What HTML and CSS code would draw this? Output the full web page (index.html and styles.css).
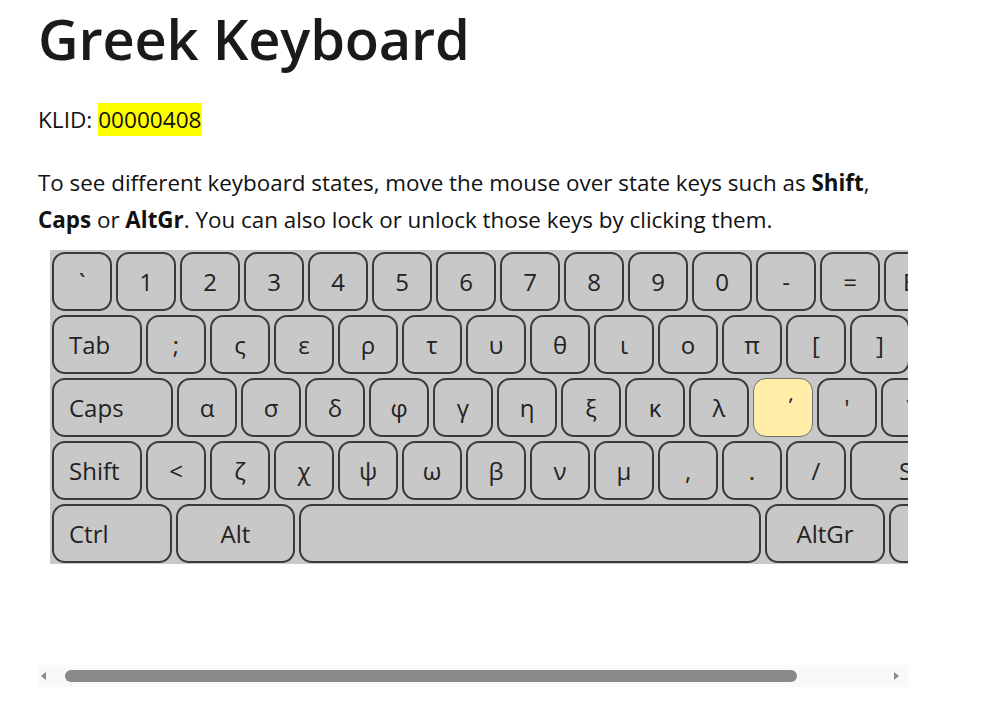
FILE: index.html
```html
<!DOCTYPE html>
<html lang="en">
<head>
    <meta charset="UTF-8">
    <meta name="viewport" content="width=device-width, initial-scale=1.0">
    <title>Greek Keyboard</title>
    <link rel="stylesheet" href="styles.css">
</head>
<body>
    <div class="page">
        <h1>Greek Keyboard</h1>
        <p class="klid">KLID: <mark>00000408</mark></p>
        <p class="intro">To see different keyboard states, move the mouse over state keys such as <b>Shift</b>, <b>Caps</b> or <b>AltGr</b>. You can also lock or unlock those keys by clicking them.</p>

        <div class="kb-view">
            <div class="keyboard">
                <!-- number row -->
                <div class="row">
                    <div class="key">`</div>
                    <div class="key">1</div>
                    <div class="key">2</div>
                    <div class="key">3</div>
                    <div class="key">4</div>
                    <div class="key">5</div>
                    <div class="key">6</div>
                    <div class="key">7</div>
                    <div class="key">8</div>
                    <div class="key">9</div>
                    <div class="key">0</div>
                    <div class="key">-</div>
                    <div class="key">=</div>
                    <div class="key mod w-back">B</div>
                </div>
                <div class="row">
                    <div class="key mod w-tab">Tab</div>
                    <div class="key">;</div>
                    <div class="key">ς</div>
                    <div class="key">ε</div>
                    <div class="key">ρ</div>
                    <div class="key">τ</div>
                    <div class="key">υ</div>
                    <div class="key">θ</div>
                    <div class="key">ι</div>
                    <div class="key">ο</div>
                    <div class="key">π</div>
                    <div class="key">[</div>
                    <div class="key">]</div>
                    <div class="key w-tab"></div>
                </div>
                <div class="row">
                    <div class="key mod w-caps">Caps</div>
                    <div class="key">α</div>
                    <div class="key">σ</div>
                    <div class="key">δ</div>
                    <div class="key">φ</div>
                    <div class="key">γ</div>
                    <div class="key">η</div>
                    <div class="key">ξ</div>
                    <div class="key">κ</div>
                    <div class="key">λ</div>
                    <div class="key dead">΄</div>
                    <div class="key">'</div>
                    <div class="key">\</div>
                    <div class="key"></div>
                </div>
                <div class="row">
                    <div class="key mod w-tab">Shift</div>
                    <div class="key">&lt;</div>
                    <div class="key">ζ</div>
                    <div class="key">χ</div>
                    <div class="key">ψ</div>
                    <div class="key">ω</div>
                    <div class="key">β</div>
                    <div class="key">ν</div>
                    <div class="key">μ</div>
                    <div class="key">,</div>
                    <div class="key">.</div>
                    <div class="key">/</div>
                    <div class="key mod w-rshift">S</div>
                </div>
                <div class="row">
                    <div class="key mod w-ctrl">Ctrl</div>
                    <div class="key w-alt">Alt</div>
                    <div class="key w-space"></div>
                    <div class="key w-ctrl">AltGr</div>
                    <div class="key w-alt"></div>
                </div>
            </div>
        </div>
        <div class="scrollbar">
            <span class="sb-left"></span>
            <span class="sb-thumb"></span>
            <span class="sb-right"></span>
        </div>
    </div>
</body>
</html>
```

FILE: styles.css
```css
body {
    margin: 0;
    padding: 0 38px;
    font-family: "Open Sans", "Noto Sans", sans-serif;
    color: #111;
    background: #fff;
}
.page {
    width: 870px;
}
h1 {
    font-size: 56px;
    font-weight: 600;
    line-height: 1.2;
    margin: 5px 0 0;
    color: #1a1a1a;
    letter-spacing: -0.2px;
}
.klid {
    font-size: 22.6px;
    line-height: 37px;
    margin: 29px 0 0;
}
.klid mark {
    background: #ffff00;
    color: #111;
    padding: 1px 0;
}
.intro {
    font-size: 22.4px;
    line-height: 37px;
    margin: 26px 0 0;
}
.intro b {
    font-weight: 700;
}

/* keyboard strip, wider than the column */
.kb-view {
    margin-top: 12px;
    width: 870px;
    height: 415px;
    overflow: hidden;
}
.keyboard {
    margin-left: 12px;
    width: 960px;
    padding: 2px 2px 1px;
    box-sizing: border-box;
    background: #c8c8c8;
    display: flex;
    flex-direction: column;
    gap: 4px;
}
.row {
    display: flex;
    gap: 4px;
}
.key {
    flex: none;
    box-sizing: border-box;
    width: 60px;
    height: 59px;
    border: 2px solid #3a3a3a;
    border-radius: 13px;
    display: flex;
    align-items: center;
    justify-content: center;
    font-size: 24px;
    color: #222;
    white-space: nowrap;
    overflow: hidden;
}
.key.mod {
    justify-content: flex-start;
    padding-left: 15px;
}
.key.dead {
    background: #ffeda8;
    border-color: #707070;
    border-width: 1px;
}
.w-tab { width: 90px; }
.w-caps { width: 121px; }
.key.w-back { width: 124px; padding-left: 17px; }
.key.w-rshift { width: 158px; padding-left: 47px; }
.w-ctrl { width: 120px; }
.w-alt { width: 119px; }
.w-space { width: 462px; }

.scrollbar {
    height: 22px;
    background: #f9f9f9;
    display: flex;
    align-items: center;
    padding: 0 9px 0 3px;
}
.sb-left {
    width: 0;
    height: 0;
    border-right: 5px solid #8a8a8a;
    border-top: 4px solid transparent;
    border-bottom: 4px solid transparent;
}
.sb-thumb {
    width: 732px;
    height: 12px;
    margin-left: 19px;
    border-radius: 6px;
    background: #8a8a8a;
}
.sb-right {
    margin-left: auto;
    width: 0;
    height: 0;
    border-left: 5px solid #8a8a8a;
    border-top: 4px solid transparent;
    border-bottom: 4px solid transparent;
}
```
